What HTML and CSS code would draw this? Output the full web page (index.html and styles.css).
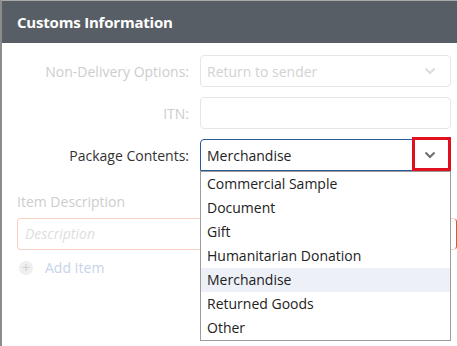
FILE: index.html
```html
<!DOCTYPE html>
<html lang="en">

<head>
    <meta charset="UTF-8">
    <meta name="viewport" content="width=device-width, initial-scale=1.0">
    <title>Customs Information</title>
    <link rel="stylesheet" href="styles.css">
</head>

<body>
    <div class="panel">
        <div class="panel-header">Customs Information</div>
        <div class="panel-body">
            <div class="form-row faded">
                <label>Non-Delivery Options:</label>
                <div class="select">
                    <span>Return to sender</span>
                    <svg class="chevron" width="12" height="8" viewBox="0 0 12 8"><path d="M1.5 1.5 6 6l4.5-4.5" fill="none" stroke="#dcdcdc" stroke-width="2"/></svg>
                </div>
            </div>
            <div class="form-row faded">
                <label>ITN:</label>
                <div class="input"></div>
            </div>
            <div class="form-row">
                <label>Package Contents:</label>
                <div class="select-wrap">
                    <div class="select active">
                        <span>Merchandise</span>
                        <svg class="chevron" width="12" height="8" viewBox="0 0 12 8"><path d="M1.5 1.5 6 6l4.5-4.5" fill="none" stroke="#6b6f74" stroke-width="2"/></svg>
                    </div>
                    <div class="highlight"></div>
                    <ul class="options">
                        <li>Commercial Sample</li>
                        <li>Document</li>
                        <li>Gift</li>
                        <li>Humanitarian Donation</li>
                        <li class="hover">Merchandise</li>
                        <li>Returned Goods</li>
                        <li>Other</li>
                    </ul>
                </div>
            </div>

            <div class="items">
                <div class="items-label">Item Description</div>
                <div class="desc-input">Description</div>
                <div class="add-item">
                    <span class="plus">+</span>
                    <span>Add Item</span>
                </div>
            </div>
        </div>
    </div>
</body>

</html>
```

FILE: styles.css
```css
/* General styles */
body {
    margin: 0;
    font-family: "Open Sans", Arial, sans-serif;
    font-size: 14px;
    background: #fff;
    overflow: hidden;
}

/* Panel */
.panel {
    border-left: 2px solid #8c8c8c;
    border-top: 1px solid #a9a9a9;
    min-height: 345px;
    width: 470px;
}

.panel-header {
    background: #575e66;
    color: #fff;
    font-weight: bold;
    font-size: 15px;
    height: 42px;
    line-height: 42px;
    padding-left: 15px;
    letter-spacing: -0.2px;
}

.panel-body {
    padding: 12px 0 0 15px;
}

/* Form rows */
.form-row {
    display: grid;
    grid-template-columns: 172px 251px;
    column-gap: 11px;
    align-items: center;
    margin-bottom: 10px;
}

.form-row label {
    text-align: right;
    color: #333;
}

.form-row.faded label {
    color: #cdcdcd;
}

.select,
.input {
    box-sizing: border-box;
    height: 32px;
    border: 1px solid #e6e6e6;
    border-radius: 4px;
    display: flex;
    align-items: center;
    justify-content: space-between;
    padding: 0 14px 0 6px;
    color: #d2d2d2;
}

.select.active {
    border-color: #2c5a98;
    border-radius: 4px 4px 0 0;
    color: #222;
}

.chevron {
    display: block;
}

/* Dropdown */
.select-wrap {
    position: relative;
}

.highlight {
    position: absolute;
    left: 212px;
    top: -2px;
    width: 33px;
    height: 28px;
    border: 3px solid #e0101f;
}

.options {
    position: absolute;
    top: 32px;
    left: 0;
    width: 251px;
    box-sizing: border-box;
    margin: 0;
    padding: 0;
    list-style: none;
    background: #fff;
    border: 1px solid #9c9c9c;
    z-index: 2;
}

.options li {
    height: 24px;
    line-height: 24px;
    padding-left: 6px;
    color: #222;
}

.options li.hover {
    background: #edf0f7;
}

/* Items */
.items {
    margin-top: 21px;
}

.items-label {
    color: #cdcdcd;
    line-height: 20px;
}

.desc-input {
    box-sizing: border-box;
    margin-top: 6px;
    width: 440px;
    height: 32px;
    line-height: 30px;
    border: 1px solid #f7d0c6;
    border-right-color: #e0572b;
    border-radius: 4px;
    padding-left: 7px;
    font-style: italic;
    color: #dedede;
}

.add-item {
    display: flex;
    align-items: center;
    gap: 12px;
    margin-top: 8px;
    padding-left: 2px;
    color: #c6d3ea;
    line-height: 20px;
}

.plus {
    width: 14px;
    height: 14px;
    border-radius: 50%;
    background: #efefef;
    color: #d0d0d0;
    font-size: 14px;
    line-height: 13px;
    text-align: center;
}
```
